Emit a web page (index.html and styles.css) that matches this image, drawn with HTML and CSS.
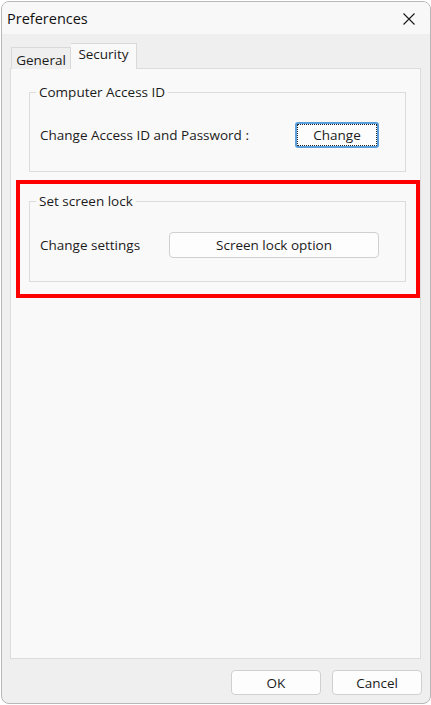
FILE: index.html
```html
<!DOCTYPE html>
<html>
<head>
<meta charset="utf-8">
<link rel="stylesheet" href="styles.css">
</head>
<body>
<div class="window">
  <div class="titlebar">
    <span class="title">Preferences</span>
    <span class="close">
      <svg width="12" height="12" viewBox="0 0 12 12"><path d="M0.5 0.5 L11.5 11.5 M11.5 0.5 L0.5 11.5" stroke="#1a1a1a" stroke-width="1.1" fill="none"/></svg>
    </span>
  </div>
  <div class="body">
    <div class="tabs">
      <div class="tab">General</div>
      <div class="tab active">Security</div>
    </div>
    <div class="panel">
      <fieldset class="group group-first">
        <legend>Computer Access ID</legend>
        <div class="row">
          <span class="label">Change Access ID and Password :</span>
          <button class="btn btn-focus">Change</button>
        </div>
      </fieldset>
      <fieldset class="group group-second">
        <legend>Set screen lock</legend>
        <div class="row">
          <span class="label">Change settings</span>
          <button class="btn btn-wide">Screen lock option</button>
        </div>
      </fieldset>
      <div class="highlight"></div>
    </div>
    <div class="footer">
      <button class="btn btn-dialog">OK</button>
      <button class="btn btn-dialog">Cancel</button>
    </div>
  </div>
</div>
</body>
</html>
```
FILE: styles.css
```css
html, body {
  margin: 0;
  padding: 0;
  background: #ffffff;
}
body {
  font-family: "Open Sans", "Noto Sans", "Liberation Sans", sans-serif;
  font-size: 13.5px;
  color: #1b1b1b;
}
.window {
  margin: 1px 0 0 1px;
  width: 428px;
  height: 701px;
  border: 1px solid #b8b8b8;
  border-radius: 8px;
  background: #efefef;
  overflow: hidden;
  display: flex;
  flex-direction: column;
}
.titlebar {
  height: 32px;
  flex: none;
  background: #f8f8f8;
  display: flex;
  align-items: center;
  justify-content: space-between;
  padding: 0 15px 0 5px;
}
.title {
  font-size: 14.5px;
  color: #111;
}
.close {
  display: flex;
  align-items: center;
  margin-top: 1px;
}
.body {
  flex: 1;
  display: flex;
  flex-direction: column;
  padding: 9px 0 0 8px;
  min-height: 0;
}
.tabs {
  display: flex;
  align-items: flex-end;
  height: 26px;
  padding-left: 1px;
  position: relative;
  z-index: 1;
}
.tab {
  box-sizing: border-box;
  height: 22px;
  width: 60px;
  border: 1px solid #d9d9d9;
  border-bottom: none;
  background: #efefef;
  display: flex;
  align-items: center;
  justify-content: center;
  padding-top: 2px;
}
.tab.active {
  height: 26px;
  width: 66px;
  background: #f9f9f9;
  border-left: none;
  padding-top: 0;
  padding-bottom: 5px;
}
.panel {
  margin-top: -1px;
  margin-right: 9px;
  flex: 1;
  border: 1px solid #dcdcdc;
  background: #f9f9f9;
  position: relative;
}
.group {
  margin: 14px 14px 0 18px;
  border: 1px solid #dcdcdc;
  padding: 0 26px 23px 10px;
}
.group legend {
  margin-left: -4px;
  padding: 0 3px;
  line-height: 18px;
}
.group-first .row {
  padding-top: 21px;
}
.group-second {
  margin-top: 20px;
}
.group-second .row {
  padding-top: 22px;
}
.row {
  display: flex;
  align-items: center;
  justify-content: space-between;
}
.label {
  white-space: nowrap;
}
.btn {
  font-family: inherit;
  font-size: 13.5px;
  color: #1b1b1b;
  background: #fdfdfd;
  border: 1px solid #d0d0d0;
  border-radius: 4px;
  height: 26px;
  padding: 0;
  margin: 0;
}
.btn-focus {
  width: 84px;
  border: 2px solid #5a9fdc;
  border-radius: 3px;
  outline: 1px dotted #222;
  outline-offset: -3px;
  background: #fdfdfd;
}
.btn-wide {
  width: 210px;
}
.highlight {
  position: absolute;
  left: 5px;
  top: 111px;
  width: 404px;
  height: 118px;
  box-sizing: border-box;
  border: 4px solid #ff0000;
  pointer-events: none;
}
.footer {
  flex: none;
  display: flex;
  justify-content: flex-end;
  gap: 11px;
  padding: 11px 8px 8px 0;
}
.btn-dialog {
  width: 90px;
  height: 25px;
}
```
